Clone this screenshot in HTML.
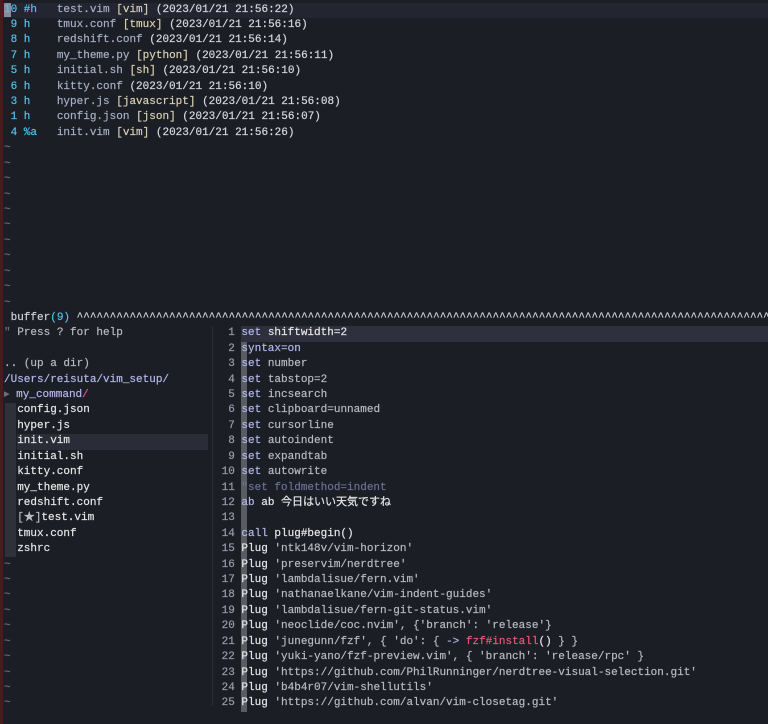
<!DOCTYPE html>
<html><head><meta charset="utf-8"><style>
html,body{margin:0;padding:0;background:#1c1e26;width:768px;height:724px;overflow:hidden}
body{position:relative;font-family:"Liberation Mono","Noto Sans CJK JP",monospace;font-size:11px;color:#d5d8e0}
.r{position:absolute;left:4px;height:15.42px;line-height:15.42px;white-space:pre;-webkit-text-stroke:0.2px currentColor}
.bd{position:absolute;left:0;top:0;width:3px;height:724px;background:#4a1a1c}
.c{color:#4fc1e9}.f{color:#a9adc4}.y{color:#d8d0b0}.t{color:#6c6f80}
.k{color:#b4b6ea}.s{color:#b8b9c2}.n{color:#9a9cad}.cm{color:#6c6f93}.rd{color:#e95678}.w{color:#e6e6e6}
.hl{position:absolute;background:#232530}
.blk{position:absolute;background:#5c5e66}
</style></head><body>
<div class="bd"></div>
<div class="hl" style="left:3px;top:2.5px;width:765px;height:15.42px"></div>
<div class="blk" style="left:4px;top:3px;width:6.6px;height:14px;background:#8a8c95"></div>
<div class="r" style="top:2.5px"><span class="c">10 #h</span>   <span class="f">test.vim</span> <span class="y">[vim]</span> (2023/01/21 21:56:22)</div>
<div class="r" style="top:17.9px"><span class="c"> 9 h </span>   <span class="f">tmux.conf</span> <span class="y">[tmux]</span> (2023/01/21 21:56:16)</div>
<div class="r" style="top:33.3px"><span class="c"> 8 h </span>   <span class="f">redshift.conf</span> (2023/01/21 21:56:14)</div>
<div class="r" style="top:48.8px"><span class="c"> 7 h </span>   <span class="f">my_theme.py</span> <span class="y">[python]</span> (2023/01/21 21:56:11)</div>
<div class="r" style="top:64.2px"><span class="c"> 5 h </span>   <span class="f">initial.sh</span> <span class="y">[sh]</span> (2023/01/21 21:56:10)</div>
<div class="r" style="top:79.6px"><span class="c"> 6 h </span>   <span class="f">kitty.conf</span> (2023/01/21 21:56:10)</div>
<div class="r" style="top:95.0px"><span class="c"> 3 h </span>   <span class="f">hyper.js</span> <span class="y">[javascript]</span> (2023/01/21 21:56:08)</div>
<div class="r" style="top:110.4px"><span class="c"> 1 h </span>   <span class="f">config.json</span> <span class="y">[json]</span> (2023/01/21 21:56:07)</div>
<div class="r" style="top:125.9px"><span class="c"> 4 %a</span>   <span class="f">init.vim</span> <span class="y">[vim]</span> (2023/01/21 21:56:26)</div>
<div class="r t" style="top:141.3px">~</div>
<div class="r t" style="top:156.7px">~</div>
<div class="r t" style="top:172.1px">~</div>
<div class="r t" style="top:187.5px">~</div>
<div class="r t" style="top:203.0px">~</div>
<div class="r t" style="top:218.4px">~</div>
<div class="r t" style="top:233.8px">~</div>
<div class="r t" style="top:249.2px">~</div>
<div class="r t" style="top:264.6px">~</div>
<div class="r t" style="top:280.1px">~</div>
<div class="r t" style="top:295.5px">~</div>
<div class="r" style="top:310.9px;color:#d0d0d8"> buffer<span class="c">(9)</span> ^^^^^^^^^^^^^^^^^^^^^^^^^^^^^^^^^^^^^^^^^^^^^^^^^^^^^^^^^^^^^^^^^^^^^^^^^^^^^^^^^^^^^^^^^^^^^^^^^^^^^^^^^^^^</div>
<div style="position:absolute;left:212px;top:326px;width:1px;height:380px;background:#2a2c36"></div>
<div class="hl" style="left:241px;top:326.3px;width:527px;height:15.42px;background:#2e303e"></div>
<div class="hl" style="left:17px;top:434.2px;width:191px;height:15.42px;background:#2a2c38"></div>
<div class="blk" style="left:5px;top:403px;width:11px;height:154px;background:#2e303a"></div>
<div class="blk" style="left:241px;top:342px;width:6px;height:370px;background:#5a5c64"></div>
<div class="r" style="top:326.3px"><span class="t">"</span> <span class="s">Press ? for help</span></div>
<div class="r s" style="top:357.1px">.. (up a dir)</div>
<div class="r k" style="top:372.6px">/Users/reisuta/vim_setup/</div>
<div class="r" style="top:388.0px"><span class="t">▸</span> <span class="k">my_command</span><span class="rd">/</span></div>
<div class="r w" style="top:403.4px">  config.json</div>
<div class="r w" style="top:418.8px">  hyper.js</div>
<div class="r w" style="top:434.2px">  init.vim</div>
<div class="r w" style="top:449.7px">  initial.sh</div>
<div class="r w" style="top:465.1px">  kitty.conf</div>
<div class="r w" style="top:480.5px">  my_theme.py</div>
<div class="r w" style="top:495.9px">  redshift.conf</div>
<div class="r w" style="top:511.3px">  <span class="s">[★]</span>test.vim</div>
<div class="r w" style="top:526.8px">  tmux.conf</div>
<div class="r w" style="top:542.2px">  zshrc</div>
<div class="r t" style="top:557.6px">~</div>
<div class="r t" style="top:573.0px">~</div>
<div class="r t" style="top:588.4px">~</div>
<div class="r t" style="top:603.9px">~</div>
<div class="r t" style="top:619.3px">~</div>
<div class="r t" style="top:634.7px">~</div>
<div class="r t" style="top:650.1px">~</div>
<div class="r t" style="top:665.5px">~</div>
<div class="r t" style="top:681.0px">~</div>
<div class="r t" style="top:696.4px">~</div>

<div class="r" style="left:215px;top:326.3px"><span class="n">  1 </span><span class="k">set</span> <span class="w">shiftwidth=2</span></div>
<div class="r" style="left:215px;top:341.7px"><span class="n">  2 </span><span class="k">syntax=on</span></div>
<div class="r" style="left:215px;top:357.1px"><span class="n">  3 </span><span class="k">set</span> <span class="s">number</span></div>
<div class="r" style="left:215px;top:372.6px"><span class="n">  4 </span><span class="k">set</span> <span class="s">tabstop=2</span></div>
<div class="r" style="left:215px;top:388.0px"><span class="n">  5 </span><span class="k">set</span> <span class="s">incsearch</span></div>
<div class="r" style="left:215px;top:403.4px"><span class="n">  6 </span><span class="k">set</span> <span class="s">clipboard=unnamed</span></div>
<div class="r" style="left:215px;top:418.8px"><span class="n">  7 </span><span class="k">set</span> <span class="s">cursorline</span></div>
<div class="r" style="left:215px;top:434.2px"><span class="n">  8 </span><span class="k">set</span> <span class="s">autoindent</span></div>
<div class="r" style="left:215px;top:449.7px"><span class="n">  9 </span><span class="k">set</span> <span class="s">expandtab</span></div>
<div class="r" style="left:215px;top:465.1px"><span class="n"> 10 </span><span class="k">set</span> <span class="s">autowrite</span></div>
<div class="r" style="left:215px;top:480.5px"><span class="n"> 11 </span><span class="cm">"set foldmethod=indent</span></div>
<div class="r" style="left:215px;top:495.9px"><span class="n"> 12 </span><span class="k">ab</span> <span class="w">ab 今日はいい天気ですね</span></div>
<div class="r" style="left:215px;top:511.3px"><span class="n"> 13 </span></div>
<div class="r" style="left:215px;top:526.8px"><span class="n"> 14 </span><span class="k">call</span> <span class="w">plug#begin()</span></div>
<div class="r" style="left:215px;top:542.2px"><span class="n"> 15 </span><span class="w">Plug</span> <span class="s">'ntk148v/vim-horizon'</span></div>
<div class="r" style="left:215px;top:557.6px"><span class="n"> 16 </span><span class="w">Plug</span> <span class="s">'preservim/nerdtree'</span></div>
<div class="r" style="left:215px;top:573.0px"><span class="n"> 17 </span><span class="w">Plug</span> <span class="s">'lambdalisue/fern.vim'</span></div>
<div class="r" style="left:215px;top:588.4px"><span class="n"> 18 </span><span class="w">Plug</span> <span class="s">'nathanaelkane/vim-indent-guides'</span></div>
<div class="r" style="left:215px;top:603.9px"><span class="n"> 19 </span><span class="w">Plug</span> <span class="s">'lambdalisue/fern-git-status.vim'</span></div>
<div class="r" style="left:215px;top:619.3px"><span class="n"> 20 </span><span class="w">Plug</span> <span class="s">'neoclide/coc.nvim', {'branch': 'release'}</span></div>
<div class="r" style="left:215px;top:634.7px"><span class="n"> 21 </span><span class="w">Plug</span> <span class="s">'junegunn/fzf', { 'do': { </span><span class="k">-&gt;</span> <span class="rd">fzf#install</span><span class="w">()</span><span class="s"> } }</span></div>
<div class="r" style="left:215px;top:650.1px"><span class="n"> 22 </span><span class="w">Plug</span> <span class="s">'yuki-yano/fzf-preview.vim', { 'branch': 'release/rpc' }</span></div>
<div class="r" style="left:215px;top:665.5px"><span class="n"> 23 </span><span class="w">Plug</span> <span class="s">'https://github.com/PhilRunninger/nerdtree-visual-selection.git'</span></div>
<div class="r" style="left:215px;top:681.0px"><span class="n"> 24 </span><span class="w">Plug</span> <span class="s">'b4b4r07/vim-shellutils'</span></div>
<div class="r" style="left:215px;top:696.4px"><span class="n"> 25 </span><span class="w">Plug</span> <span class="s">'https://github.com/alvan/vim-closetag.git'</span></div>
</body></html>
